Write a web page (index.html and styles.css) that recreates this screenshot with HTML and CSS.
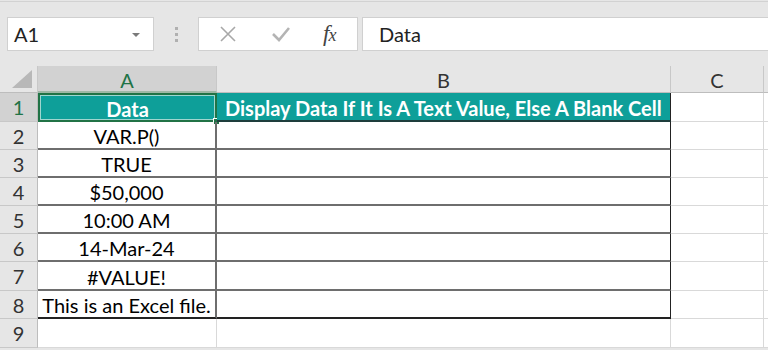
FILE: index.html
```html
<!DOCTYPE html>
<html>
<head>
<meta charset="utf-8">
<link rel="stylesheet" href="styles.css">
</head>
<body>
<div class="toolbar">
  <div class="namebox">
    <span class="ref">A1</span>
    <svg class="caret" width="8" height="5" viewBox="0 0 8 5"><path d="M0 0 L8 0 L4 4 Z" fill="#7a7a7a"/></svg>
  </div>
  <div class="dots"><i></i><i></i><i></i></div>
  <div class="fbtns">
    <svg class="ico" width="18" height="18" viewBox="0 0 18 18"><path d="M2 2 L16 16 M16 2 L2 16" stroke="#a8a8a8" stroke-width="1.6" fill="none"/></svg>
    <svg class="ico" width="20" height="18" viewBox="0 0 20 18"><path d="M2 9 L8 15 L18 3" stroke="#b4b4b4" stroke-width="2.6" fill="none"/></svg>
    <span class="fx">f<span class="x">x</span></span>
  </div>
  <div class="fbar">Data</div>
</div>
<div class="sheet">
  <div class="corner"><svg width="22" height="20" viewBox="0 0 22 20"><path d="M21 1 L21 19 L1 19 Z" fill="#b8b8b8"/></svg></div>
  <div class="ch sel">A</div>
  <div class="ch">B</div>
  <div class="ch">C</div>
  <div class="ch last"></div>

  <div class="rh sel">1</div>
  <div class="c a hd a1">Data<span class="handle"></span></div>
  <div class="c b hd">Display Data If It Is A Text Value, Else A Blank Cell</div>
  <div class="c"></div><div class="c last"></div>

  <div class="rh">2</div><div class="c a t">VAR.P()</div><div class="c b t"></div><div class="c"></div><div class="c last"></div>
  <div class="rh">3</div><div class="c a t">TRUE</div><div class="c b t"></div><div class="c"></div><div class="c last"></div>
  <div class="rh">4</div><div class="c a t">$50,000</div><div class="c b t"></div><div class="c"></div><div class="c last"></div>
  <div class="rh">5</div><div class="c a t">10:00 AM</div><div class="c b t"></div><div class="c"></div><div class="c last"></div>
  <div class="rh">6</div><div class="c a t">14-Mar-24</div><div class="c b t"></div><div class="c"></div><div class="c last"></div>
  <div class="rh">7</div><div class="c a t">#VALUE!</div><div class="c b t"></div><div class="c"></div><div class="c last"></div>
  <div class="rh">8</div><div class="c a t bot">This is an Excel file.</div><div class="c b t bot"></div><div class="c"></div><div class="c last"></div>
  <div class="rh">9</div><div class="c"></div><div class="c"></div><div class="c"></div><div class="c last"></div>
</div>
</body>
</html>
```
FILE: styles.css
```css
* { box-sizing: border-box; }
html, body { margin: 0; padding: 0; }
body {
  width: 768px;
  height: 350px;
  overflow: hidden;
  background: #e6e6e6;
  font-family: Lato, "Open Sans", sans-serif;
}
.toolbar {
  height: 65px;
  border-top: 1px solid #d2d2d2;
  margin-top: 1px;
  display: flex;
  align-items: flex-start;
  padding-top: 15px;
  padding-left: 7px;
}
.namebox {
  width: 147px;
  height: 34px;
  background: #fff;
  border: 1px solid #d0d0d0;
  display: flex;
  align-items: center;
  justify-content: space-between;
  padding: 0 13px 0 6px;
}
.ref { font-size: 20px; color: #222; }
.caret { margin-top: 2px; }
.dots {
  width: 44px;
  height: 34px;
  display: flex;
  flex-direction: column;
  align-items: center;
  justify-content: center;
  gap: 3px;
}
.dots i { display: block; width: 3px; height: 3px; background: #b0b0b0; }
.fbtns {
  width: 160px;
  height: 34px;
  background: #fff;
  border: 1px solid #d0d0d0;
  display: flex;
  align-items: center;
  padding-left: 20px;
  gap: 34px;
}
.fx {
  font-family: "Liberation Serif", serif;
  font-style: italic;
  font-size: 23px;
  color: #444;
  margin-left: -2px;
  letter-spacing: -1px;
}
.fx .x { font-size: 18px; }
.fbar {
  flex: 1;
  margin-left: 4px;
  height: 34px;
  background: #fff;
  border: 1px solid #d0d0d0;
  border-right: none;
  display: flex;
  align-items: center;
  padding-left: 16px;
  font-size: 20px;
  color: #222;
}
.sheet {
  display: grid;
  grid-template-columns: 38px 179px 454px 93px 4px;
  grid-template-rows: 27px 29px 28px 28px 28px 28px 28px 29px 28px 29px;
  background: #fff;
}
.corner {
  background: #e6e6e6;
  border-right: 1px solid #c8c8c8;
  border-bottom: 1px solid #bdbdbd;
  display: flex;
  align-items: flex-end;
  justify-content: flex-end;
  padding: 0 4px 3px 0;
}
.ch {
  background: #e6e6e6;
  border-right: 1px solid #c8c8c8;
  border-bottom: 1px solid #bdbdbd;
  display: flex;
  align-items: center;
  justify-content: center;
  font-size: 20px;
  color: #333;
  padding-top: 2px;
}
.ch.sel { background: #d2d2d2; color: #217346; border-bottom: 2px solid #9fb8a6; }
.ch.last, .c.last { border-right: none; }
.rh {
  background: #e6e6e6;
  border-right: 1px solid #bdbdbd;
  border-bottom: 1px solid #c8c8c8;
  display: flex;
  align-items: center;
  justify-content: center;
  font-size: 20px;
  color: #333;
}
.rh.sel { background: #d2d2d2; color: #217346; }
.c {
  border-right: 1px solid #d9d9d9;
  border-bottom: 1px solid #d9d9d9;
  display: flex;
  align-items: center;
  justify-content: center;
  font-size: 20px;
  color: #000;
  white-space: nowrap;
  position: relative;
  padding-top: 2px;
}
.c.hd {
  background: #0e9f99;
  color: #fff;
  font-weight: bold;
  border-bottom: 2px solid #1e3e3c;
  border-right: 1px solid #0e9f99;
}
.c.b.hd { border-right: 1px solid #222; justify-content: flex-start; padding-left: 8px; }
.c.a1 {
  border: 2px solid #217346;
  box-shadow: inset 0 0 0 1px #9fd6cf;
  border-bottom: 2px solid #217346;
}
.handle {
  position: absolute;
  right: -5px;
  bottom: -5px;
  width: 7px;
  height: 7px;
  background: #217346;
  border: 1px solid #fff;
}
.c.t { border-bottom: 2px solid #6e6e6e; }
.c.a.t { border-right: 2px solid #6e6e6e; }
.c.b.t { border-right: 1px solid #222; }
.c.t.bot { border-bottom: 2px solid #222; }
```
